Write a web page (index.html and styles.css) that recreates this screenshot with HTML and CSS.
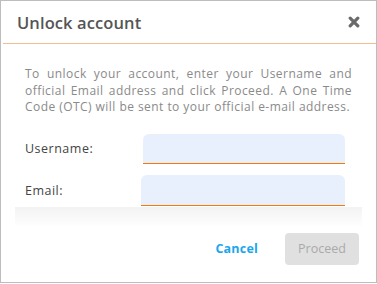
FILE: index.html
```html
<!DOCTYPE html>
<html>
<head>
<meta charset="utf-8">
<link rel="stylesheet" href="styles.css">
</head>
<body>
<div class="dialog">
  <div class="header">
    <span class="title">Unlock account</span>
    <span class="close" aria-label="Close">
      <svg width="12" height="12" viewBox="0 0 12 12"><path d="M2.2 2.2 L9.8 9.8 M9.8 2.2 L2.2 9.8" stroke="#6a6a6a" stroke-width="3.2" stroke-linecap="round"/></svg>
    </span>
  </div>
  <div class="body">
    <p class="intro">To unlock your account, enter your Username and official Email address and click Proceed. A One Time Code (OTC) will be sent to your official e-mail address.</p>
    <div class="row">
      <label class="label">Username:</label>
      <div class="input input-user"></div>
    </div>
    <div class="row">
      <label class="label">Email:</label>
      <div class="input input-email"></div>
    </div>
    <div class="fade"></div>
  </div>
  <div class="footer">
    <span class="cancel">Cancel</span>
    <span class="proceed">Proceed</span>
  </div>
</div>
</body>
</html>
```
FILE: styles.css
```css
html, body {
  margin: 0;
  padding: 0;
  background: #fff;
}
body {
  font-family: "Open Sans", "DejaVu Sans", sans-serif;
}
.dialog {
  box-sizing: border-box;
  width: 377px;
  height: 283px;
  border: 1px solid #bdbdbd;
  background: #fff;
  display: flex;
  flex-direction: column;
}
.header {
  height: 42px;
  margin-left: 2px;
  padding: 0 16px 0 14px;
  display: flex;
  align-items: center;
  justify-content: space-between;
  border-bottom: 1px solid #f4bd90;
}
.title {
  font-size: 16.5px;
  font-weight: 600;
  color: #555;
  letter-spacing: 0.1px;
}
.close {
  display: flex;
  width: 12px;
  height: 12px;
}
.intro {
  margin: 22px 24px 0 24px;
  font-size: 12px;
  line-height: 16.5px;
  letter-spacing: 0.45px;
  color: #8a8a8a;
  text-align: justify;
}
.row {
  display: flex;
  align-items: center;
  justify-content: space-between;
  padding: 0 31px 0 24px;
  margin-top: 11px;
}
.intro + .row {
  margin-top: 18px;
}
.label {
  font-size: 12.5px;
  letter-spacing: 0.5px;
  color: #444;
}
.input {
  box-sizing: border-box;
  height: 30px;
  background: #e8f0fe;
  border-radius: 6px 6px 0 0;
  border-bottom: 1px solid #f57c00;
}
.input-user { width: 202px; }
.input-email { width: 204px; height: 31px; }
.fade {
  margin: 1px 14px 0 14px;
  height: 21px;
  background: linear-gradient(to bottom, #f3f3f3, #fff);
}
.footer {
  display: flex;
  align-items: center;
  justify-content: flex-end;
  padding: 5px 17px 0 0;
}
.cancel {
  font-size: 12.5px;
  font-weight: 700;
  letter-spacing: 0.2px;
  color: #1ba6ec;
  margin-right: 27px;
}
.proceed {
  box-sizing: border-box;
  width: 74px;
  height: 32px;
  border-radius: 4px;
  background: #e0e0e0;
  color: #aaa;
  font-size: 12.5px;
  display: flex;
  align-items: center;
  justify-content: center;
}
```
